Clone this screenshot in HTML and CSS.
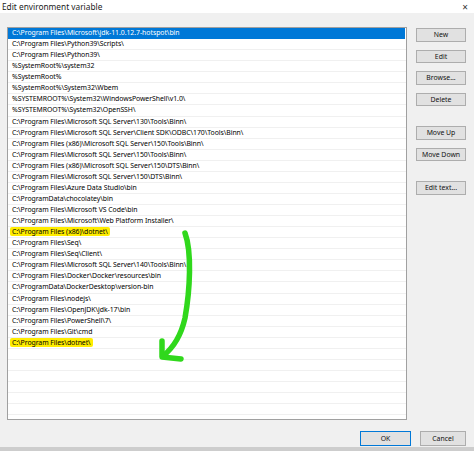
FILE: index.html
```html
<!DOCTYPE html>
<html>
<head>
<meta charset="utf-8">
<link rel="stylesheet" href="styles.css">
</head>
<body>
<div class="window">
  <div class="titlebar">
    <span class="title">Edit environment variable</span>
    <span class="close">×</span>
  </div>
  <div class="content">
    <div class="main">
      <div class="list">
        <div class="row selected">C:\Program Files\Microsoft\jdk-11.0.12.7-hotspot\bin</div>
        <div class="row">C:\Program Files\Python39\Scripts\</div>
        <div class="row">C:\Program Files\Python39\</div>
        <div class="row">%SystemRoot%\system32</div>
        <div class="row">%SystemRoot%</div>
        <div class="row">%SystemRoot%\System32\Wbem</div>
        <div class="row">%SYSTEMROOT%\System32\WindowsPowerShell\v1.0\</div>
        <div class="row">%SYSTEMROOT%\System32\OpenSSH\</div>
        <div class="row">C:\Program Files\Microsoft SQL Server\130\Tools\Binn\</div>
        <div class="row">C:\Program Files\Microsoft SQL Server\Client SDK\ODBC\170\Tools\Binn\</div>
        <div class="row">C:\Program Files (x86)\Microsoft SQL Server\150\Tools\Binn\</div>
        <div class="row">C:\Program Files\Microsoft SQL Server\150\Tools\Binn\</div>
        <div class="row">C:\Program Files (x86)\Microsoft SQL Server\150\DTS\Binn\</div>
        <div class="row">C:\Program Files\Microsoft SQL Server\150\DTS\Binn\</div>
        <div class="row">C:\Program Files\Azure Data Studio\bin</div>
        <div class="row">C:\ProgramData\chocolatey\bin</div>
        <div class="row">C:\Program Files\Microsoft VS Code\bin</div>
        <div class="row">C:\Program Files\Microsoft\Web Platform Installer\</div>
        <div class="row"><span class="hl">C:\Program Files (x86)\dotnet\</span></div>
        <div class="row">C:\Program Files\Seq\</div>
        <div class="row">C:\Program Files\Seq\Client\</div>
        <div class="row">C:\Program Files\Microsoft SQL Server\140\Tools\Binn\</div>
        <div class="row">C:\Program Files\Docker\Docker\resources\bin</div>
        <div class="row">C:\ProgramData\DockerDesktop\version-bin</div>
        <div class="row">C:\Program Files\nodejs\</div>
        <div class="row">C:\Program Files\OpenJDK\jdk-17\bin</div>
        <div class="row">C:\Program Files\PowerShell\7\</div>
        <div class="row">C:\Program Files\Git\cmd</div>
        <div class="row"><span class="hl">C:\Program Files\dotnet\</span></div>
        <div class="row"></div>
        <div class="row"></div>
        <div class="row"></div>
        <div class="row"></div>
        <div class="row"></div>
        <div class="row"></div>
        <div class="row"></div>
      </div>
      <div class="side">
        <div class="group">
          <div class="btn">New</div>
          <div class="btn">Edit</div>
          <div class="btn">Browse...</div>
          <div class="btn">Delete</div>
        </div>
        <div class="group">
          <div class="btn">Move Up</div>
          <div class="btn">Move Down</div>
        </div>
        <div class="group">
          <div class="btn">Edit text...</div>
        </div>
      </div>
    </div>
    <div class="footer">
      <div class="btn ok">OK</div>
      <div class="btn cancel">Cancel</div>
    </div>
  </div>
  <div class="strip"></div>
  <svg class="arrow" width="474" height="451" viewBox="0 0 474 451">
    <path d="M185 233 C192 252 190 290 185 318 C181 336 173 348 163 356" fill="none" stroke="#30d81c" stroke-width="5.5" stroke-linecap="round" stroke-linejoin="round"/>
    <path d="M162 341 L162 357 L181 359" fill="none" stroke="#30d81c" stroke-width="5.5" stroke-linecap="round" stroke-linejoin="round"/>
  </svg>
</div>
</body>
</html>
```
FILE: styles.css
```css
html, body {
  margin: 0;
  padding: 0;
}
body {
  font-family: "Noto Sans", "Open Sans", sans-serif;
  font-size: 7px;
  color: #000;
}
.window {
  position: relative;
  width: 474px;
  height: 451px;
  display: flex;
  flex-direction: column;
  background: #f0f0f0;
  overflow: hidden;
}
.titlebar {
  height: 13px;
  background: #fff;
  display: flex;
  align-items: center;
  justify-content: space-between;
  padding: 0 6px 0 2px;
  flex: none;
}
.title {
  font-size: 8.3px;
  color: #222;
}
.close {
  font-size: 10px;
  color: #333;
  line-height: 1;
}
.content {
  flex: 1;
  display: flex;
  flex-direction: column;
  padding: 14px 8px 0 7px;
}
.main {
  display: flex;
  gap: 9px;
}
.list {
  width: 398px;
  height: 391px;
  border: 1px solid #a0a0a0;
  background: #fff;
  overflow: hidden;
  flex: none;
}
.row {
  box-sizing: border-box;
  height: 11.07px;
  line-height: 10px;
  padding-left: 4px;
  border-bottom: 1px solid #f0f0f0;
  white-space: nowrap;
  font-size: 6.9px;
  letter-spacing: -0.05px;
}
.row.selected {
  background: #0078d7;
  color: #fff;
  border-bottom-color: #0078d7;
  margin-right: 1px;
}
.hl {
  background: #ffec00;
  padding: 0 2px 0 2px;
  margin-left: -2px;
  border-radius: 2px;
}
.side {
  width: 50px;
  display: flex;
  flex-direction: column;
  gap: 20px;
  padding-top: 1px;
}
.group {
  display: flex;
  flex-direction: column;
  gap: 8px;
}
.btn {
  box-sizing: border-box;
  height: 13.5px;
  background: #e1e1e1;
  border: 1px solid #adadad;
  display: flex;
  align-items: center;
  justify-content: center;
  font-size: 6.9px;
  color: #111;
}
.footer {
  display: flex;
  justify-content: flex-end;
  gap: 9px;
  margin-top: 11px;
}
.footer .btn {
  height: 14.5px;
}
.ok {
  width: 51px;
  border-color: #0078d7;
}
.cancel {
  width: 46px;
}
.strip {
  height: 4px;
  background: #cdcdcd;
  flex: none;
}
.arrow {
  position: absolute;
  left: 0;
  top: 0;
  pointer-events: none;
}
```
